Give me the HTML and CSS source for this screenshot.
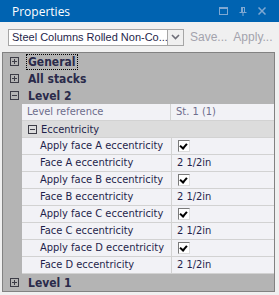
FILE: index.html
```html
<!DOCTYPE html>
<html>
<head>
<meta charset="utf-8">
<link rel="stylesheet" href="styles.css">
</head>
<body>
<div class="panel">
  <div class="titlebar">
    <span class="title">Properties</span>
    <div class="tb-icons">
      <svg width="9" height="8" viewBox="0 0 9 8"><rect x="0.5" y="0.5" width="8" height="7" fill="none" stroke="#7fa8d2" stroke-width="1"/><rect x="0" y="0" width="9" height="2" fill="#7fa8d2"/></svg>
      <svg width="8" height="9" viewBox="0 0 8 9"><path d="M2 0.5H6M2.5 0.5V5M5.5 0.5V5M0.5 5.5H7.5M4 5.5V9" fill="none" stroke="#7fa8d2" stroke-width="1"/><rect x="2" y="1" width="2" height="4" fill="#7fa8d2"/></svg>
      <svg width="8" height="8" viewBox="0 0 8 8"><path d="M0.5 0.5L7.5 7.5M7.5 0.5L0.5 7.5" stroke="#7fa8d2" stroke-width="1.5"/></svg>
    </div>
  </div>
  <div class="toolbar">
    <div class="combo">
      <span class="combo-text">Steel Columns Rolled Non-Co...</span>
      <span class="combo-btn"><svg width="9" height="6" viewBox="0 0 9 6"><path d="M1 1L4.5 4.5L8 1" fill="none" stroke="#6e6e78" stroke-width="1.6"/></svg></span>
    </div>
    <span class="tbtn">Save...</span>
    <span class="tbtn">Apply...</span>
  </div>
  <div class="grid">
    <div class="cat"><span class="exp plus"></span><span class="cat-label focus">General</span></div>
    <div class="cat"><span class="exp plus"></span><span class="cat-label">All stacks</span></div>
    <div class="cat"><span class="exp minus"></span><span class="cat-label">Level 2</span></div>
    <div class="prop readonly"><div class="name">Level reference</div><div class="val">St. 1 (1)</div></div>
    <div class="sub"><div class="sub-in"><span class="exp minus"></span><span>Eccentricity</span></div></div>
    <div class="prop child"><div class="name">Apply face A eccentricity</div><div class="val"><span class="chk"></span></div></div>
    <div class="prop child"><div class="name">Face A eccentricity</div><div class="val">2 1/2in</div></div>
    <div class="prop child"><div class="name">Apply face B eccentricity</div><div class="val"><span class="chk"></span></div></div>
    <div class="prop child"><div class="name">Face B eccentricity</div><div class="val">2 1/2in</div></div>
    <div class="prop child"><div class="name">Apply face C eccentricity</div><div class="val"><span class="chk"></span></div></div>
    <div class="prop child"><div class="name">Face C eccentricity</div><div class="val">2 1/2in</div></div>
    <div class="prop child"><div class="name">Apply face D eccentricity</div><div class="val"><span class="chk"></span></div></div>
    <div class="prop child"><div class="name">Face D eccentricity</div><div class="val">2 1/2in</div></div>
    <div class="cat"><span class="exp plus"></span><span class="cat-label">Level 1</span></div>
  </div>
</div>
</body>
</html>
```

FILE: styles.css
```css
html, body {
  margin: 0;
  padding: 0;
  background: #f0f0f0;
}
.panel {
  width: 279px;
  height: 295px;
  overflow: hidden;
  background: #f0f0f0;
  font-family: "Liberation Sans", sans-serif;
}
.titlebar {
  height: 22px;
  background: #0063b1;
  display: flex;
  align-items: center;
  justify-content: space-between;
  padding: 0 13px 0 12px;
}
.title {
  color: #ffffff;
  font-size: 12px;
  font-family: "Open Sans", sans-serif;
}
.tb-icons {
  display: flex;
  align-items: center;
  gap: 11px;
}
.tb-icons svg { display: block; }
.toolbar {
  height: 30px;
  display: flex;
  align-items: center;
  padding-left: 8px;
}
.combo {
  width: 174px;
  height: 15px;
  border: 1px solid #a6a6a6;
  background: #ffffff;
  display: flex;
  align-items: stretch;
}
.combo-text {
  flex: 1;
  font-size: 11px;
  line-height: 15px;
  color: #1f1f4b;
  padding-left: 3px;
  white-space: nowrap;
  overflow: hidden;
}
.combo-btn {
  width: 15px;
  border-left: 1px solid #a6a6a6;
  background: #f0f0f0;
  display: flex;
  align-items: center;
  justify-content: center;
}
.tbtn {
  font-size: 12px;
  color: #a3a3ad;
  margin-left: 6px;
}
.grid {
  margin-left: 2px;
  width: 271px;
  height: 238px;
  border: 1px solid #828282;
  background: #b4b4b4;
  font-family: "DejaVu Sans Condensed", "DejaVu Sans", sans-serif;
  font-size: 11px;
  color: #1f1f4b;
}
.cat {
  height: 17px;
  display: flex;
  align-items: center;
  padding-left: 7px;
}
.exp {
  width: 7px;
  height: 7px;
  border: 1px solid #3c3c46;
  position: relative;
  flex: none;
}
.exp::before {
  content: "";
  position: absolute;
  left: 1px;
  top: 3px;
  width: 5px;
  height: 1px;
  background: #3c3c46;
}
.exp.plus::after {
  content: "";
  position: absolute;
  left: 3px;
  top: 1px;
  width: 1px;
  height: 5px;
  background: #3c3c46;
}
.cat-label {
  font-weight: bold;
  font-size: 12px;
  margin-left: 7px;
  padding: 0 1px;
  line-height: 14px;
  border: 1px solid transparent;
  color: #2a2a4a;
}
.cat-label.focus {
  border: 1px dotted #000000;
}
.prop {
  height: 16px;
  margin-left: 19px;
  display: flex;
  border-bottom: 1px solid #d2d2d2;
  background: #f2f2f6;
}
.prop .name {
  width: 149px;
  border-right: 1px solid #d2d2d2;
  padding-left: 5px;
  line-height: 16px;
  white-space: nowrap;
  overflow: hidden;
  box-sizing: border-box;
}
.prop.child .name {
  padding-left: 18px;
  width: 150px;
}
.prop .val {
  flex: 1;
  padding-left: 5px;
  line-height: 16px;
  display: flex;
  align-items: center;
}
.prop.readonly .name,
.prop.readonly .val {
  color: #6d6d8c;
}
.sub {
  height: 16px;
  margin-left: 19px;
  border-bottom: 1px solid #d2d2d2;
  background: #dcdcdc;
}
.sub-in {
  display: flex;
  align-items: center;
  height: 16px;
  padding-left: 6px;
  gap: 4px;
}
.chk {
  width: 10px;
  height: 10px;
  border: 1px solid #7a7a7a;
  border-right-color: #dcdcdc;
  border-bottom-color: #dcdcdc;
  background: #ffffff;
  position: relative;
  margin-left: 1px;
}
.chk::after {
  content: "";
  position: absolute;
  left: 2px;
  top: 1px;
  width: 3px;
  height: 5px;
  border-right: 2px solid #000;
  border-bottom: 2px solid #000;
  transform: rotate(40deg);
}
```
